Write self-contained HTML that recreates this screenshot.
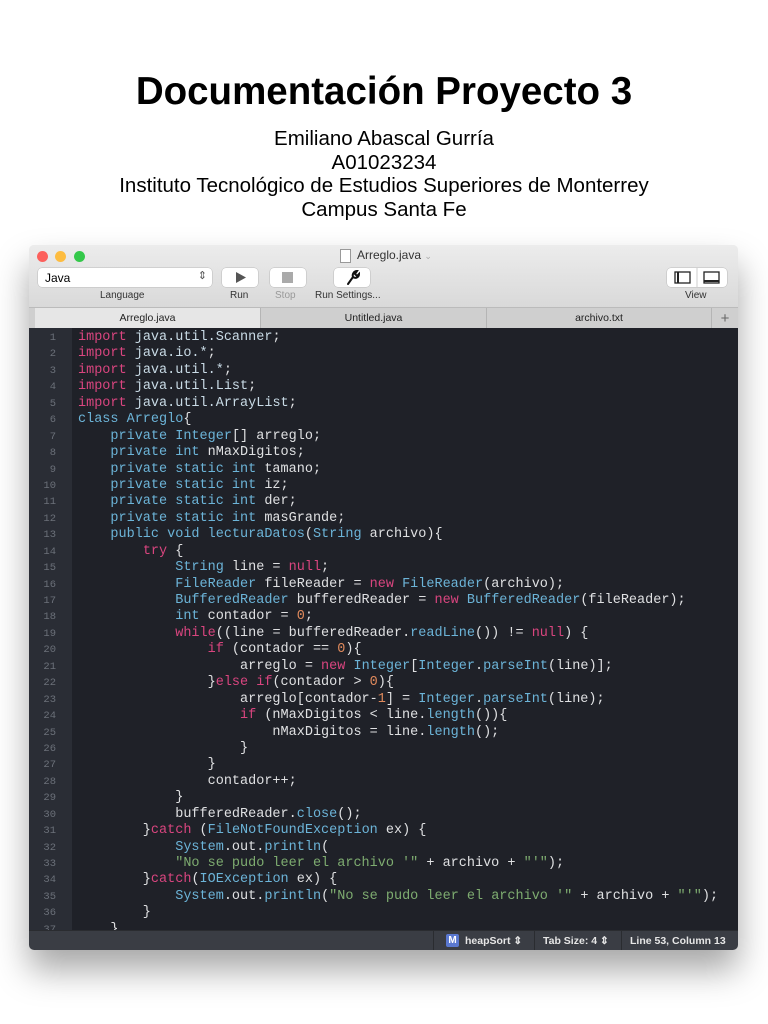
<!DOCTYPE html><html><head><meta charset="utf-8"><style>
body{margin:0;width:768px;height:1024px;background:#fff;font-family:"Liberation Sans",sans-serif;position:relative;overflow:hidden}
.t{position:absolute;left:0;width:768px;text-align:center;color:#000}
.win{position:absolute;left:29px;top:245px;width:709px;height:705px;border-radius:5px;overflow:hidden;box-shadow:0 20px 34px rgba(0,0,0,.35);background:#e8e8e8}
.tb{position:absolute;left:0;top:0;width:709px;height:62px;background:linear-gradient(#ececec,#d9d9d9)}
.dot{position:absolute;top:6px;width:11px;height:11px;border-radius:50%}
.btn{position:absolute;top:23px;height:19px;background:#fff;border-radius:4px;box-shadow:0 0 0 .5px #bbb}
.lbl{position:absolute;top:45px;font-size:10px;color:#333}
.tabs{position:absolute;top:62px;left:0;width:709px;height:21px;background:#cfcfcf;border-top:1px solid #bbb;border-bottom:1px solid #aaa}
.tab{position:absolute;top:0;height:21px;line-height:21px;text-align:center;font-size:10.5px;color:#222;border-right:1px solid #b5b5b5}
.ed{position:absolute;top:83px;left:0;width:709px;height:602px;background:#1f2128}
.gut{position:absolute;left:0;top:0;width:43px;height:602px;background:#2a2d35}
pre{margin:0;position:absolute;top:2px;font-family:"Liberation Mono",monospace;font-size:13.5px;line-height:16.43px}
.nums{left:0;width:27px;text-align:right;color:#6b7079;font-size:10.5px}
.code{left:49px;color:#dfe0e2}
.k{color:#d9457f}.b{color:#6cb4d8}.n{color:#e08a5c}.s{color:#7eac70}.p{color:#c9dbe6}
.sb{position:absolute;top:685px;left:0;width:709px;height:20px;background:#3a3d44;border-top:1px solid #2a2c30;color:#e6e6e6;font-size:10.5px;font-weight:bold}
.sb span{position:absolute;top:4px}
</style></head><body>
<div class="t" style="top:70px;font-size:38.5px;font-weight:bold">Documentación Proyecto 3</div>
<div class="t" style="top:127px;font-size:20.5px;line-height:23.5px">Emiliano Abascal Gurría<br>A01023234<br>Instituto Tecnológico de Estudios Superiores de Monterrey<br>Campus Santa Fe</div>
<div class="win">
<div class="tb">
<div class="dot" style="left:8px;background:#fc605c"></div><div class="dot" style="left:26px;background:#fdbc40"></div><div class="dot" style="left:45px;background:#34c84a"></div>
<div style="position:absolute;left:311px;top:4px;width:9px;height:12px;border:1px solid #999;background:#fff"></div>
<div style="position:absolute;left:328px;top:3px;font-size:12px;color:#333">Arreglo.java <span style="color:#aaa;font-size:9px">⌄</span></div>
<div class="btn" style="left:9px;width:174px"><span style="position:absolute;left:7px;top:3px;font-size:12px">Java</span><span style="position:absolute;right:5px;top:1px;font-size:11px;color:#555">⇕</span></div>
<div class="btn" style="left:193px;width:36px"><svg width="36" height="19"><path d="M14 4L24 9.5L14 15Z" fill="#555"/></svg></div>
<div class="btn" style="left:241px;width:36px"><div style="position:absolute;left:12px;top:4px;width:11px;height:11px;background:#aaa"></div></div>
<div class="btn" style="left:305px;width:36px"><svg width="36" height="19"><path d="M14 16L19 9M19 9C18 6 20 3 23 3L21 6L23 8L25 6C25 9 22 11 19 9" fill="none" stroke="#111" stroke-width="2" stroke-linecap="round"/></svg></div>
<div class="btn" style="left:638px;width:60px"><svg width="60" height="19"><rect x="8" y="4" width="15" height="11" fill="none" stroke="#222" stroke-width="1.3"/><line x1="11" y1="4" x2="11" y2="15" stroke="#222" stroke-width="2"/><line x1="30" y1="0" x2="30" y2="19" stroke="#ccc"/><rect x="37" y="4" width="15" height="11" fill="none" stroke="#222" stroke-width="1.3"/><line x1="37" y1="13" x2="52" y2="13" stroke="#222" stroke-width="2"/></svg></div>
<div class="lbl" style="left:71px">Language</div><div class="lbl" style="left:201px">Run</div><div class="lbl" style="left:246px;color:#999">Stop</div><div class="lbl" style="left:286px">Run Settings...</div><div class="lbl" style="left:656px">View</div>
</div>
<div class="tabs">
<div class="tab" style="left:6px;width:225px;background:#e6e6e6">Arreglo.java</div>
<div class="tab" style="left:232px;width:225px">Untitled.java</div>
<div class="tab" style="left:458px;width:224px">archivo.txt</div>
<div class="tab" style="left:683px;width:26px;font-size:15px;color:#666;border:0">+</div>
</div>
<div class="ed"><div class="gut"></div>
<pre class="nums">1
2
3
4
5
6
7
8
9
10
11
12
13
14
15
16
17
18
19
20
21
22
23
24
25
26
27
28
29
30
31
32
33
34
35
36
37</pre>
<pre class="code"><span class="k">import</span> <span class="p">java.util.Scanner</span>;
<span class="k">import</span> <span class="p">java.io.*</span>;
<span class="k">import</span> <span class="p">java.util.*</span>;
<span class="k">import</span> <span class="p">java.util.List</span>;
<span class="k">import</span> <span class="p">java.util.ArrayList</span>;
<span class="b">class Arreglo</span>{
    <span class="b">private Integer</span>[] arreglo;
    <span class="b">private int</span> nMaxDigitos;
    <span class="b">private static int</span> tamano;
    <span class="b">private static int</span> iz;
    <span class="b">private static int</span> der;
    <span class="b">private static int</span> masGrande;
    <span class="b">public void lecturaDatos</span>(<span class="b">String</span> archivo){
        <span class="k">try</span> {
            <span class="b">String</span> line = <span class="k">null</span>;
            <span class="b">FileReader</span> fileReader = <span class="k">new</span> <span class="b">FileReader</span>(archivo);
            <span class="b">BufferedReader</span> bufferedReader = <span class="k">new</span> <span class="b">BufferedReader</span>(fileReader);
            <span class="b">int</span> contador = <span class="n">0</span>;
            <span class="k">while</span>((line = bufferedReader.<span class="b">readLine</span>()) != <span class="k">null</span>) {
                <span class="k">if</span> (contador == <span class="n">0</span>){
                    arreglo = <span class="k">new</span> <span class="b">Integer</span>[<span class="b">Integer</span>.<span class="b">parseInt</span>(line)];
                }<span class="k">else if</span>(contador > <span class="n">0</span>){
                    arreglo[contador-<span class="n">1</span>] = <span class="b">Integer</span>.<span class="b">parseInt</span>(line);
                    <span class="k">if</span> (nMaxDigitos < line.<span class="b">length</span>()){
                        nMaxDigitos = line.<span class="b">length</span>();
                    }
                }
                contador++;
            }
            bufferedReader.<span class="b">close</span>();
        }<span class="k">catch</span> (<span class="b">FileNotFoundException</span> ex) {
            <span class="b">System</span>.out.<span class="b">println</span>(
            <span class="s">"No se pudo leer el archivo '"</span> + archivo + <span class="s">"'"</span>);
        }<span class="k">catch</span>(<span class="b">IOException</span> ex) {
            <span class="b">System</span>.out.<span class="b">println</span>(<span class="s">"No se pudo leer el archivo '"</span> + archivo + <span class="s">"'"</span>);
        }
    }</pre>
</div>
<div class="sb">
<div style="position:absolute;left:404px;top:0;width:1px;height:20px;background:#2a2c30"></div>
<span style="left:417px;top:3px;background:#5a78d0;color:#fff;width:13px;height:13px;text-align:center;line-height:13px;border-radius:2px;font-size:10px">M</span>
<span style="left:436px">heapSort ⇕</span>
<div style="position:absolute;left:505px;top:0;width:1px;height:20px;background:#2a2c30"></div>
<span style="left:514px">Tab Size: 4 ⇕</span>
<div style="position:absolute;left:592px;top:0;width:1px;height:20px;background:#2a2c30"></div>
<span style="left:601px">Line 53, Column 13</span>
</div>
</div>
</body></html>
